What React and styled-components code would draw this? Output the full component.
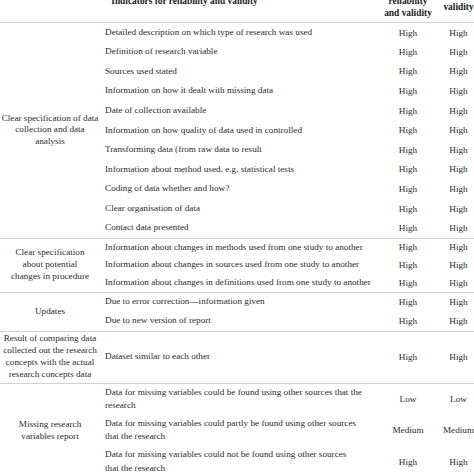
import React from "react";
import styled, { createGlobalStyle } from "styled-components";

const Global = createGlobalStyle`
  html, body { margin: 0; padding: 0; background: #fff; overflow: hidden; }
  body { width: 474px; height: 474px; }
`;

const Frame = styled.div`
  width: 474px;
  height: 474px;
  overflow: hidden;
`;

const Table = styled.table`
  border-collapse: collapse;
  table-layout: fixed;
  width: 484px;
  margin-top: -19.5px;
  font-family: "Liberation Serif", "Times New Roman", serif;
  font-size: 9.2px;
  color: #2b2b2b;
`;

const HeadCell = styled.th`
  font-weight: bold;
  font-size: 9.4px;
  color: #1a1a1a;
  text-align: center;
  vertical-align: middle;
  white-space: nowrap;
  line-height: 12px;
  height: 41.5px;
  padding: 0 ${(p) => p.$padRight || 0}px 0 0;
  border-bottom: 1.5px solid #d6cfcf;
`;

const Row = styled.tr`
  height: ${(p) => p.$h}px;
  border-top: ${(p) => (p.$first ? "1.5px solid #d6cfcf" : "none")};
`;

const CategoryCell = styled.td`
  text-align: center;
  vertical-align: middle;
  white-space: nowrap;
  line-height: 11.8px;
  padding: 0;
`;

const ItemCell = styled.td`
  text-align: left;
  vertical-align: middle;
  white-space: nowrap;
  line-height: 13.5px;
  padding: 0 0 0 5px;
`;

const ValueCell = styled.td`
  text-align: center;
  vertical-align: middle;
  padding: 0;
`;

const Lines = ({ lines }) =>
  lines.map((l, i) => (
    <React.Fragment key={i}>
      {i > 0 && <br />}
      {l}
    </React.Fragment>
  ));

const sections = [
  {
    cat: ["Clear specification of data", "collection and data", "analysis"],
    h: 19.6,
    rows: [
      [["Detailed description on which type of research was used"], "High", "High"],
      [["Definition of research variable"], "High", "High"],
      [["Sources used stated"], "High", "High"],
      [["Information on how it dealt with missing data"], "High", "High"],
      [["Date of collection available"], "High", "High"],
      [["Information on how quality of data used in controlled"], "High", "High"],
      [["Transforming data (from raw data to result"], "High", "High"],
      [["Information about method used, e.g, statistical tests"], "High", "High"],
      [["Coding of data whether and how?"], "High", "High"],
      [["Clear organisation of data"], "High", "High"],
      [["Contact data presented"], "High", "High"],
    ],
  },
  {
    cat: ["Clear specification", "about potential", "changes in procedure"],
    h: 18,
    rows: [
      [["Information about changes in methods used from one study to another"], "High", "High"],
      [["Information about changes in sources used from one study to another"], "High", "High"],
      [["Information about changes in definitions used from one study to another"], "High", "High"],
    ],
  },
  {
    cat: ["Updates"],
    h: 19.5,
    rows: [
      [["Due to error correction\u2014information given"], "High", "High"],
      [["Due to new version of report"], "High", "High"],
    ],
  },
  {
    cat: [
      "Result of comparing data",
      "collected out the research",
      "concepts with the actual",
      "research concepts data",
    ],
    h: 52,
    rows: [[["Dataset similar to each other"], "High", "High"]],
  },
  {
    cat: ["Missing research", "variables report"],
    h: 31.5,
    rows: [
      [
        ["Data for missing variables could be found using other sources that the", "research"],
        "Low",
        "Low",
      ],
      [
        ["Data for missing variables could partly be found using other sources", "that the research"],
        "Medium",
        "Medium",
      ],
      [
        ["Data for missing variables could not be found using other sources", "that the research"],
        "High",
        "High",
      ],
    ],
  },
];

export default function App() {
  return (
    <Frame>
      <Global />
      <Table>
        <colgroup>
          <col style={{ width: 100 }} />
          <col style={{ width: 283 }} />
          <col style={{ width: 50 }} />
          <col style={{ width: 51 }} />
        </colgroup>
        <thead>
          <tr>
            <HeadCell colSpan={2} $padRight={14}>
              Indicators for reliability and validity
            </HeadCell>
            <HeadCell>
              Contributes to
              <br />
              reliability
              <br />
              and validity
            </HeadCell>
            <HeadCell>
              Contributes
              <br />
              validity
            </HeadCell>
          </tr>
        </thead>
        <tbody>
          {sections.map((s, si) =>
            s.rows.map((r, ri) => (
              <Row key={`${si}-${ri}`} $h={s.h} $first={ri === 0 && si > 0}>
                {ri === 0 && (
                  <CategoryCell rowSpan={s.rows.length}>
                    <Lines lines={s.cat} />
                  </CategoryCell>
                )}
                <ItemCell>
                  <Lines lines={r[0]} />
                </ItemCell>
                <ValueCell>{r[1]}</ValueCell>
                <ValueCell>{r[2]}</ValueCell>
              </Row>
            ))
          )}
        </tbody>
      </Table>
    </Frame>
  );
}
